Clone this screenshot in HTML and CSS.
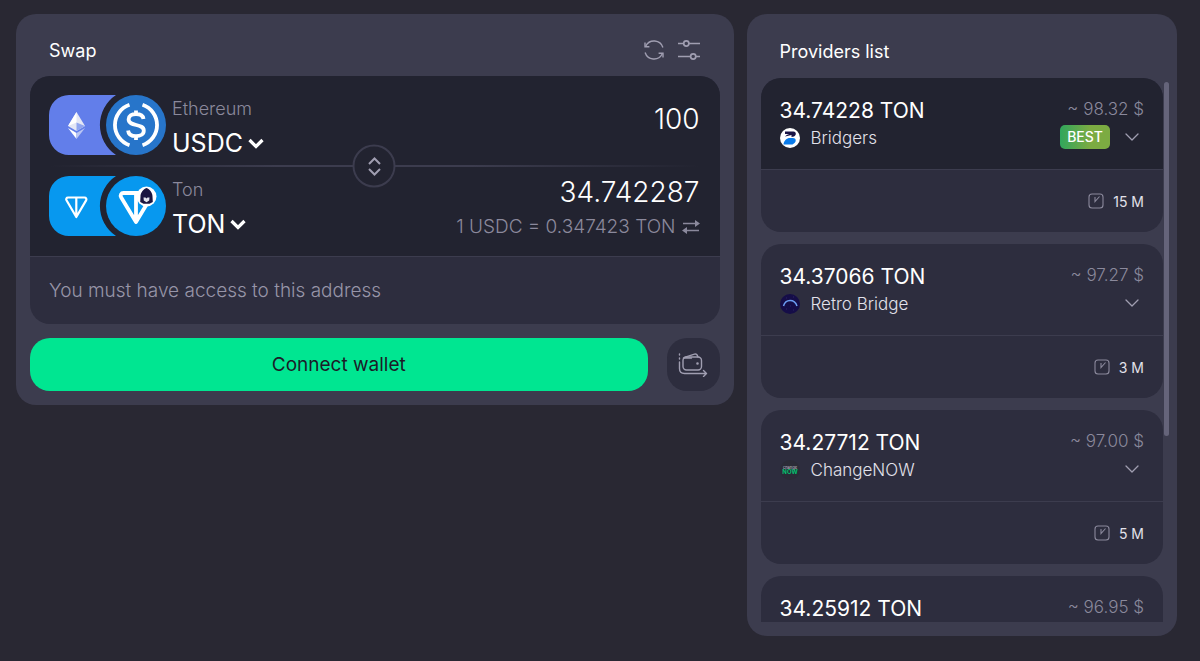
FILE: index.html
```html
<!DOCTYPE html>
<html lang="en">
<head>
    <meta charset="UTF-8">
    <meta name="viewport" content="width=device-width, initial-scale=1.0">
    <title>Swap</title>
    <link rel="stylesheet" href="styles.css">
</head>
<body>
    <!-- Shared icons -->
    <svg class="sprite" aria-hidden="true">
        <symbol id="chevron" viewBox="0 0 14 8">
            <path d="M1 1l6 6 6-6" fill="none" stroke="currentColor" stroke-width="1.3" stroke-linecap="round" stroke-linejoin="round"/>
        </symbol>
        <symbol id="chevron-bold" viewBox="0 0 16 11">
            <path d="M1.500 2l6.500 6.500L14.500 2" fill="none" stroke="currentColor" stroke-width="3.2"/>
        </symbol>
        <symbol id="clock" viewBox="0 0 16 16">
            <rect x="1" y="1" width="14" height="14" rx="3" fill="none" stroke="currentColor" stroke-width="1.1"/>
            <path d="M7 4v4.500l4.500-5" fill="none" stroke="currentColor" stroke-width="1.1"/>
        </symbol>
    </svg>

    <main class="page">
        <section class="panel">
            <header class="panel-header">
                <h1>Swap</h1>
                <div class="tools">
                    <button class="icon-button" type="button" aria-label="Refresh rate">
                        <svg width="20" height="20" viewBox="0 0 20 20" fill="none" stroke="currentColor" stroke-width="1.4">
                            <path d="M18.900 7.500A9.300 9.300 0 0 0 1.800 6M1.100 12.500A9.300 9.300 0 0 0 18.200 14"/>
                            <path d="M1 2.600v4.200h4.400M19 17.400v-4.200h-4.400"/>
                        </svg>
                    </button>
                    <button class="icon-button" type="button" aria-label="Settings">
                        <svg width="24" height="20" viewBox="0 0 24 20" fill="none" stroke="currentColor" stroke-width="1.7">
                            <path d="M1 3.500h5.600M12 3.500h11M1 16.500h12.400M19 16.500h4"/>
                            <circle cx="9.300" cy="3.500" r="2.600"/>
                            <circle cx="16.200" cy="16.500" r="2.600"/>
                        </svg>
                    </button>
                </div>
            </header>

            <div class="form">
                <div class="amounts">
                    <div class="token-row">
                        <svg class="coins" width="117" height="60" viewBox="0 0 117 60" aria-hidden="true">
                            <path d="M20 0H67A36 36 0 0 0 67 60H20A20 20 0 0 1 0 40V20A20 20 0 0 1 20 0z" fill="#627eea"/>
                            <path d="M27.500 17l8.500 14-8.500 5-8.500-5z" fill="#e4e7f5"/>
                            <path d="M27.500 17v10.400L19 31z" fill="#fff"/>
                            <path d="M27.500 27.400L36 31l-8.500 5z" fill="#8fa5ef"/>
                            <path d="M19 33l8.500 5v6z" fill="#fff"/>
                            <path d="M36 33l-8.500 5v6z" fill="#b9c5f3"/>
                            <circle cx="87" cy="30" r="30" fill="#2775ca"/>
                            <path d="M80.500 9.800a21.300 21.300 0 0 0 0 40.400M93.500 9.800a21.300 21.300 0 0 1 0 40.400" fill="none" stroke="#fff" stroke-width="3.800"/>
                            <path d="M94.500 24c-.4-3.200-3.300-5-7.500-5-4.300 0-7.400 2-7.400 5.300 0 7.700 15.200 3.700 15.200 11.400 0 3.500-3.400 5.500-7.800 5.500-4.600 0-7.600-2.200-7.900-5.700M87 15.500V19M87 41v4" fill="none" stroke="#fff" stroke-width="3.800"/>
                        </svg>
                        <div class="token">
                            <span class="network">Ethereum</span>
                            <button class="token-button" type="button">USDC <svg width="16" height="11"><use href="#chevron-bold"/></svg></button>
                        </div>
                        <div class="amount">
                            <input class="value pay" type="text" value="100" aria-label="You send">
                        </div>
                    </div>

                    <div class="divider">
                        <button class="switch" type="button" aria-label="Switch direction">
                            <svg width="14" height="20" viewBox="0 0 14 20" fill="none" stroke="currentColor" stroke-width="2">
                                <path d="M1.500 7.500L7 2l5.500 5.500M1.500 12.500L7 18l5.500-5.500"/>
                            </svg>
                        </button>
                    </div>

                    <div class="token-row">
                        <svg class="coins" width="117" height="60" viewBox="0 0 117 60" aria-hidden="true">
                            <path d="M20 0H67A36 36 0 0 0 67 60H20A20 20 0 0 1 0 40V20A20 20 0 0 1 20 0z" fill="#0798ef"/>
                            <path d="M19 21.500h16.500c1.600 0 2.400 1.500 1.600 2.800L27.300 41 17.500 24.300c-.8-1.300 0-2.800 1.500-2.800zM27.300 21.500V40" fill="none" stroke="#fff" stroke-width="2.200" stroke-linejoin="round"/>
                            <circle cx="87" cy="30" r="30" fill="#0798ef"/>
                            <path d="M74.500 17h25c2.500 0 3.600 2.200 2.400 4.200L87 46 72.100 21.200c-1.200-2 0-4.200 2.400-4.200zM87 17v28" fill="none" stroke="#fff" stroke-width="3.800" stroke-linejoin="round"/>
                            <circle cx="97.500" cy="20.500" r="10" fill="#fff"/>
                            <path d="M97.500 12c-3.200 1.400-6 4.500-6 8.500l-.3 5.500 3.300 1.800h6l3.300-1.800-.3-5.500c0-4-2.800-7.100-6-8.500z" fill="#1b1540"/>
                            <path d="M94.500 21.500h2l1 1 1-1h2l-.3 3-2.700 1.800-2.700-1.800z" fill="#e4e4ec"/>
                        </svg>
                        <div class="token">
                            <span class="network">Ton</span>
                            <button class="token-button" type="button">TON <svg width="16" height="11"><use href="#chevron-bold"/></svg></button>
                        </div>
                        <div class="amount">
                            <output class="value">34.742287</output>
                            <button class="rate" type="button">1 USDC = 0.347423 TON
                                <svg width="18" height="14" viewBox="0 0 18 14" fill="none" stroke="currentColor" stroke-width="1.700">
                                    <path d="M1 3.500h14M17 10.500H3"/>
                                    <path d="M13 0l5 3.500-5 3.500zM5 7l-5 3.500L5 14z" fill="currentColor" stroke="none"/>
                                </svg>
                            </button>
                        </div>
                    </div>
                </div>
                <input class="address" type="text" placeholder="You must have access to this address" aria-label="Receiving address">
            </div>

            <div class="actions">
                <button class="connect" type="button">Connect wallet</button>
                <button class="wallet" type="button" aria-label="Send to another wallet">
                    <svg width="30" height="24" viewBox="0 0 30 24" fill="none" stroke="currentColor" stroke-width="1.400" stroke-linecap="round" stroke-linejoin="round">
                        <path d="M1.500 1v1M1.500 5v1M1.500 9v6.500q0 5 5 5H28M25.500 17.500l3 3-3 3"/>
                        <rect x="5" y="4" width="18.500" height="13" rx="3.500"/>
                        <path d="M6.500 4.300l10-3.200q2-.6 2.700 1l.8 1.900M5.500 5h8"/>
                        <circle cx="19.500" cy="10.500" r=".6"/>
                    </svg>
                </button>
            </div>
        </section>

        <section class="panel providers">
            <header class="panel-header">
                <h2>Providers list</h2>
            </header>
            <div class="list-wrap">
                <ul class="list">
                    <li class="card active">
                        <div class="card-main">
                            <div>
                                <div class="card-amount">34.74228 TON</div>
                                <div class="card-name">
                                    <svg width="20" height="20" viewBox="0 0 20 20" aria-hidden="true">
                                        <circle cx="10" cy="10" r="10" fill="#fff"/>
                                        <path d="M5 3.500h8.500c2.500 0 3.500 3.500.5 5l-2.500.5V7L5 8.500c2-2 3.500-2.500 6-2.500H5z" fill="#1a1446"/>
                                        <path d="M3.500 16.500c.5-4 3-6.500 6.500-6.500h3c3 0 3.500 3 1.500 5l-2 1.500z" fill="#0a7bea"/>
                                    </svg>
                                    Bridgers
                                </div>
                            </div>
                            <div class="card-side">
                                <span class="price">~ 98.32 $</span>
                                <div class="card-more">
                                    <span class="badge">BEST</span>
                                    <button class="icon-button" type="button" aria-label="Show details"><svg width="14" height="8"><use href="#chevron"/></svg></button>
                                </div>
                            </div>
                        </div>
                        <div class="card-foot"><svg width="16" height="16"><use href="#clock"/></svg>15 M</div>
                    </li>
                    <li class="card">
                        <div class="card-main">
                            <div>
                                <div class="card-amount">34.37066 TON</div>
                                <div class="card-name">
                                    <svg width="20" height="20" viewBox="0 0 20 20" aria-hidden="true">
                                        <circle cx="10" cy="10" r="10" fill="#150d48"/>
                                        <path d="M3.500 12c2-7.300 11-7.300 13.500 0" fill="none" stroke="#6b9df2" stroke-width="1.500"/>
                                        <path d="M6 4h.6M13 3h.6M10 12h.6M6 15h.6M13 16h.6" stroke="#4a438c" stroke-width=".8"/>
                                    </svg>
                                    Retro Bridge
                                </div>
                            </div>
                            <div class="card-side">
                                <span class="price">~ 97.27 $</span>
                                <div class="card-more">
                                    <button class="icon-button" type="button" aria-label="Show details"><svg width="14" height="8"><use href="#chevron"/></svg></button>
                                </div>
                            </div>
                        </div>
                        <div class="card-foot"><svg width="16" height="16"><use href="#clock"/></svg>3 M</div>
                    </li>
                    <li class="card">
                        <div class="card-main">
                            <div>
                                <div class="card-amount">34.27712 TON</div>
                                <div class="card-name">
                                    <svg width="20" height="20" viewBox="0 0 20 20" aria-hidden="true">
                                        <circle cx="10" cy="10" r="10" fill="#2b2b37"/>
                                        <text class="logo-top" x="10" y="9" text-anchor="middle">change</text>
                                        <text class="logo-bottom" x="10" y="14" text-anchor="middle">NOW</text>
                                    </svg>
                                    ChangeNOW
                                </div>
                            </div>
                            <div class="card-side">
                                <span class="price">~ 97.00 $</span>
                                <div class="card-more">
                                    <button class="icon-button" type="button" aria-label="Show details"><svg width="14" height="8"><use href="#chevron"/></svg></button>
                                </div>
                            </div>
                        </div>
                        <div class="card-foot"><svg width="16" height="16"><use href="#clock"/></svg>5 M</div>
                    </li>
                    <li class="card">
                        <div class="card-main">
                            <div class="card-amount">34.25912 TON</div>
                            <div class="card-side">
                                <span class="price">~ 96.95 $</span>
                            </div>
                        </div>
                    </li>
                </ul>
                <div class="thumb"></div>
            </div>
        </section>
    </main>
</body>
</html>
```
FILE: styles.css
```css
* {
    box-sizing: border-box;
}
body {
    margin: 0;
    background-color: #292833;
    color: #fff;
    font-family: Inter, "Liberation Sans", sans-serif;
    font-size: 17px;
}
button, input {
    margin: 0;
    padding: 0;
    border: none;
    background: none;
    color: inherit;
    font: inherit;
}
button {
    cursor: pointer;
}
svg {
    display: block;
    flex: none;
}
.sprite {
    position: absolute;
    width: 0;
    height: 0;
}
.page {
    display: grid;
    grid-template-columns: 5fr 3fr;
    align-items: start;
    gap: 13px;
    min-height: 100vh;
    padding: 14px 23px 25px 16px;
}
.panel {
    padding: 0 14px 14px;
    border-radius: 20px;
    background-color: #3c3c4e;
}
.panel-header {
    display: flex;
    align-items: center;
    justify-content: space-between;
    height: 62px;
    padding: 10px 19px 0;
}
h1, h2 {
    margin: 0;
    font-size: 18px;
    font-weight: 400;
}
.tools {
    display: flex;
    gap: 13px;
}
.icon-button {
    color: #a09eb1;
}

/* Swap form */
.form {
    overflow: hidden;
    border-radius: 20px;
    background-color: #2d2d3e;
}
.amounts {
    padding: 19px 20px 19px 19px;
    border-bottom: 1px solid #3c3c4e;
    background-color: #222330;
}
.token-row {
    display: flex;
    gap: 6px;
    height: 61px;
}
.token {
    display: flex;
    flex-direction: column;
    align-items: flex-start;
}
.network {
    color: #8b899c;
    font-size: 18px;
    font-weight: 300;
    line-height: 28px;
}
.token-button {
    display: flex;
    align-items: center;
    gap: 5px;
    font-size: 25px;
    font-weight: 400;
    line-height: 40px;
}
.amount {
    display: flex;
    flex: 1;
    flex-direction: column;
    align-items: flex-end;
    min-width: 0;
}
.value {
    font-size: 28px;
    font-weight: 300;
    line-height: 32px;
}
.pay {
    width: 100%;
    height: 48px;
    text-align: right;
}
.rate {
    display: flex;
    align-items: center;
    gap: 6px;
    color: #8b899c;
    font-size: 19px;
    font-weight: 300;
    line-height: 38px;
}
.divider {
    position: relative;
    display: flex;
    align-items: center;
    height: 20px;
}
.divider::before {
    content: "";
    flex: 1;
    height: 2px;
    background: linear-gradient(90deg, transparent, #3c3c4e 35%, #3c3c4e 65%, transparent);
}
.switch {
    position: absolute;
    top: 50%;
    left: 50%;
    display: grid;
    place-items: center;
    width: 43px;
    height: 43px;
    border: 2px solid #3c3c4e;
    border-radius: 50%;
    background-color: #222330;
    color: #a09eb1;
    transform: translate(-50%, -50%);
}
.address {
    display: block;
    width: 100%;
    height: 67px;
    padding: 0 19px;
    font-size: 19px;
    font-weight: 300;
}
.address::placeholder {
    color: #9795a8;
    opacity: 1;
}
.actions {
    display: flex;
    gap: 19px;
    margin-top: 14px;
}
.connect {
    flex: 1;
    height: 53px;
    border-radius: 20px;
    background-color: #00e691;
    color: #1c1c28;
    font-size: 19px;
    font-weight: 400;
}
.wallet {
    display: grid;
    place-items: center;
    width: 53px;
    height: 53px;
    border-radius: 20px;
    background-color: #2d2d3e;
    color: #a09eb1;
}

/* Providers */
.providers {
    display: flex;
    flex-direction: column;
    height: calc(100vh - 39px);
}
.providers .panel-header {
    flex: none;
    height: 64px;
}
.list-wrap {
    position: relative;
    flex: 1;
    min-height: 0;
}
.list {
    display: flex;
    flex-direction: column;
    gap: 12px;
    height: 100%;
    margin: 0;
    padding: 0;
    overflow-y: auto;
    list-style: none;
    scrollbar-width: none;
}
.thumb {
    position: absolute;
    top: 4px;
    right: -6px;
    width: 5px;
    height: 65%;
    border-radius: 3px;
    background-color: #65647a;
}
.card {
    flex: none;
    overflow: hidden;
    border-radius: 20px;
    background-color: #2d2d3e;
}
.card-main {
    display: flex;
    justify-content: space-between;
    height: 92px;
    padding: 18px 19px;
    border-bottom: 1px solid #3c3c4e;
}
.active .card-main {
    background-color: #222330;
}
.card-amount {
    font-size: 21px;
    line-height: 29px;
}
.card-name {
    display: flex;
    align-items: center;
    gap: 11px;
    color: #e2e1ea;
    font-size: 17px;
    font-weight: 300;
    line-height: 26px;
}
.card-side {
    display: flex;
    flex-direction: column;
    align-items: flex-end;
}
.price {
    color: #8b899c;
    font-size: 17px;
    font-weight: 300;
    line-height: 26px;
}
.card-more {
    display: flex;
    align-items: center;
    gap: 15px;
    height: 30px;
    padding-right: 5px;
}
.badge {
    padding: 0 7px;
    border-radius: 5px;
    background: linear-gradient(90deg, #30a65c, #7cab42 60%);
    font-size: 14px;
    font-weight: 500;
    line-height: 24px;
}
.card-foot {
    display: flex;
    align-items: center;
    justify-content: flex-end;
    gap: 9px;
    height: 62px;
    padding: 0 19px;
    color: #e2e1ea;
    font-size: 14px;
}
.card-foot svg {
    color: #8b899c;
}
.logo-top, .logo-bottom {
    fill: #c9c9d6;
    font-size: 4px;
    font-weight: 400;
}
.logo-bottom {
    fill: #00c26f;
    font-size: 6px;
    font-weight: 700;
}
```
